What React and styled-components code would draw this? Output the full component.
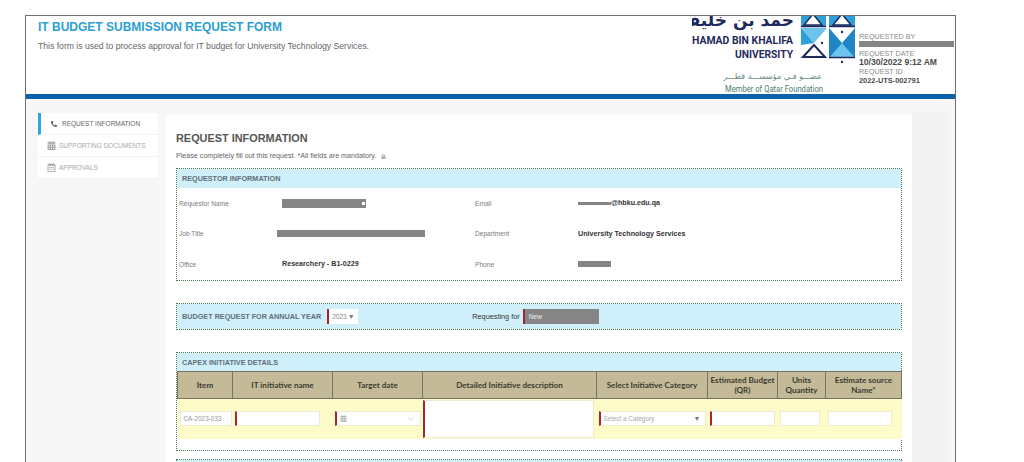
import styled, { createGlobalStyle } from "styled-components";
import { FaPhoneAlt, FaCalendarAlt, FaRegCalendarAlt, FaLock } from "react-icons/fa";
import { ChevronDown } from "lucide-react";

const Global = createGlobalStyle`
  html, body {
    margin: 0;
    height: 462px;
    overflow: hidden;
    background: #fff;
  }
  * { box-sizing: border-box; }
`;

const Frame = styled.div`
  margin: 15px 0 0 25px;
  width: 931px;
  height: 447px;
  overflow: hidden;
  border: 1px solid #6f6f6f;
  border-bottom: 0;
  font-family: "Liberation Sans", Arial, sans-serif;
  display: flex;
  flex-direction: column;
`;

const Header = styled.header`
  height: 78px;
  flex: none;
  display: flex;
  background: #fff;
  padding-left: 12px;
`;

const TitleBlock = styled.div`
  flex: 1;
  padding-top: 4px;
`;

const Title = styled.h1`
  margin: 0;
  font-size: 12px;
  line-height: 14px;
  font-weight: 700;
  color: #2b9fd1;
`;

const Subtitle = styled.p`
  margin: 7px 0 0;
  font-size: 8.65px;
  line-height: 11px;
  color: #666;
`;

const LogoSvg = styled.svg`
  flex: none;
  width: 166px;
  height: 78px;
  display: block;
`;

const Meta = styled.div`
  flex: none;
  width: 97px;
  padding: 16px 0 0 1px;
  display: flex;
  flex-direction: column;
`;

const MetaLabel = styled.span`
  font-size: 7.2px;
  line-height: 9px;
  color: #8a8a8a;
`;

const MetaValue = styled.span`
  font-size: ${(p) => p.$size || 8.6}px;
  line-height: 9px;
  font-weight: 700;
  color: #4a4a4a;
  white-space: nowrap;
`;

const Redacted = styled.span`
  background: #858585;
  width: ${(p) => p.$w}px;
  height: ${(p) => p.$h || 6}px;
  margin-left: ${(p) => p.$ml || 0}px;
  margin-bottom: ${(p) => p.$mb || 0}px;
  flex: none;
  display: flex;
  align-items: center;
  justify-content: flex-end;
  padding-right: 1px;
`;

const RedactGap = styled.i`
  display: block;
  width: 3px;
  height: 3px;
  background: #fff;
`;

const BlueBar = styled.div`
  height: 5px;
  flex: none;
  background: #0b62ac;
`;

const Body = styled.div`
  flex: 1;
  display: flex;
  align-items: flex-start;
  background: #f7f7f7;
  padding: 14px 7px 0 12px;
  min-height: 0;
`;

const Sidebar = styled.nav`
  width: 120px;
  flex: none;
  margin-right: 8px;
  background: #fff;
  display: flex;
  flex-direction: column;
`;

const NavItem = styled.div`
  height: 22px;
  display: flex;
  align-items: center;
  gap: ${(p) => (p.$active ? 5 : 3)}px;
  padding-left: ${(p) => (p.$active ? 10 : 9)}px;
  font-size: 6.5px;
  color: ${(p) => (p.$active ? "#666" : "#a9a9a9")};
  border-left: ${(p) => (p.$active ? "3px solid #2ba6e0" : "0")};
  border-bottom: 1px solid #f3f3f3;
  white-space: nowrap;
  svg { flex: none; color: ${(p) => (p.$active ? "#555" : "#a0a0a0")}; }
`;

const Card = styled.main`
  width: 746px;
  flex: none;
  margin-top: 2px;
  height: 400px;
  background: #fff;
  padding: 16px 10px 0;
`;

const Heading = styled.h2`
  margin: 0;
  font-size: 10.9px;
  line-height: 14px;
  font-weight: 700;
  color: #555;
`;

const Note = styled.p`
  margin: 7px 0 0;
  font-size: 7.15px;
  line-height: 9px;
  color: #666;
  display: flex;
  align-items: center;
  gap: 5px;
  svg { color: #b0b0b0; }
`;

const Section = styled.section`
  border: 1px dotted #4d7a4d;
  margin-top: ${(p) => p.$top}px;
  height: ${(p) => p.$height}px;
  width: 726px;
`;

const Band = styled.div`
  background: #cfeffa;
  height: ${(p) => p.$height || 19}px;
  display: flex;
  align-items: center;
  padding-left: 5px;
  font-size: 7.25px;
  font-weight: 700;
  color: #5f7078;
  white-space: nowrap;
`;

const InfoGrid = styled.div`
  display: grid;
  grid-template-columns: 103px 193px 103px 1fr;
  grid-auto-rows: 30.5px;
  padding-left: 2px;
  align-items: center;
`;

const InfoLabel = styled.span`
  font-size: 6.6px;
  color: #7c7c7c;
`;

const InfoValue = styled.span`
  font-size: 7.15px;
  font-weight: 700;
  color: #333;
  white-space: nowrap;
  display: flex;
  align-items: center;
`;

const YearSelect = styled.div`
  width: 31px;
  height: 15px;
  margin-left: 6px;
  background: #fff;
  border-left: 2px solid #a02530;
  display: flex;
  align-items: center;
  padding-left: 3px;
  gap: 1px;
  font-size: 6.5px;
  font-weight: 400;
  color: #888;
`;

const RequestLabel = styled.span`
  margin-left: 114px;
  margin-right: 3px;
  font-size: 7.3px;
  font-weight: 400;
  color: #333;
`;

const NewSelect = styled.div`
  width: 76px;
  height: 15px;
  background: #858585;
  border-left: 2px solid #a02530;
  padding-left: 4px;
  line-height: 15px;
  font-size: 6.6px;
  font-weight: 400;
  color: #eee;
`;

const Table = styled.table`
  width: 724px;
  border-collapse: collapse;
  table-layout: fixed;
`;

const Th = styled.th`
  height: 27px;
  padding: 0;
  background: #c4ba97;
  border: 1px solid #77735f;
  font-family: Lato, "Open Sans", sans-serif;
  font-size: 8.1px;
  line-height: 10px;
  font-weight: 700;
  color: #3a3a30;
`;

const Td = styled.td`
  height: 40px;
  padding: ${(p) => (p.$flush ? 0 : "0 2px")};
  background: #fdfcc9;
  vertical-align: middle;
`;

const Field = styled.div`
  height: ${(p) => p.$h || 15}px;
  width: ${(p) => p.$w}px;
  background: #fff;
  border: 1px solid #ecebd2;
  border-left: ${(p) => (p.$req ? "2px solid #a5262c" : "1px solid #ecebd2")};
  padding: 0 4px 0 3px;
  display: flex;
  align-items: center;
  justify-content: space-between;
  font-size: 6.4px;
  color: ${(p) => (p.$muted ? "#999" : "#a8a8a8")};
  white-space: nowrap;
  svg { flex: none; color: #b5b5b5; }
`;

const Caret = styled.span`
  font-size: 7px;
  color: #7a7a7a;
`;

const Aside = styled.aside`
  width: 36px;
  flex: none;
  height: 400px;
  margin-top: -1px;
  background: #f3f3f3;
`;

const Logo = () => (
  <LogoSvg viewBox="692 16 166 78">
    <text x="794" y="26" textAnchor="end" fontFamily="'DejaVu Sans', sans-serif" fontWeight="700" fontSize="17" fill="#1f2a5c">حمد بن خليفة</text>
    <text x="692" y="44" fontFamily="Roboto, sans-serif" fontWeight="700" fontSize="11" fill="#1f2a5c" textLength="101" lengthAdjust="spacingAndGlyphs">HAMAD BIN KHALIFA</text>
    <text x="735" y="58" fontFamily="Roboto, sans-serif" fontWeight="700" fontSize="11" fill="#1f2a5c" textLength="58" lengthAdjust="spacingAndGlyphs">UNIVERSITY</text>

    <path d="M801 16h25v10h-25z" fill="#2f9fd8" />
    <path d="M813 14l9 11h-18z" fill="#fff" stroke="#1f2a5c" strokeWidth="1.5" />
    <path d="M801 26.500h25" stroke="#1f2a5c" strokeWidth="1.5" />
    <path d="M829 16h26v10h-26z" fill="#2f9fd8" />
    <path d="M842 14l9 11h-18z" fill="#fff" stroke="#1f2a5c" strokeWidth="1.5" />
    <path d="M829 26.500h26" stroke="#1f2a5c" strokeWidth="1.500" />

    <path d="M801 28h26v30h-26z" fill="#fff" />
    <path d="M801 28h26l-13 15z" fill="#6cc4ec" />
    <path d="M801 28v17l13-2z" fill="#2f9fd8" />
    <path d="M803 57l11-12 11 12z" fill="#fff" stroke="#1f2a5c" strokeWidth="2" />
    <circle cx="822" cy="43" r="1.2" fill="#1f2a5c" />

    <path d="M829 28h26v30h-26z" fill="#1f85c4" />
    <path d="M829 28h26l-13 15z" fill="#fff" />
    <path d="M829 58h26l-13-15z" fill="#6cc4ec" />
    <path d="M829 57.500h26" stroke="#1f2a5c" strokeWidth="1.500" />
    <circle cx="842" cy="32" r="1.2" fill="#1f2a5c" />
    <circle cx="842" cy="62" r="1.2" fill="#1f2a5c" />

    <text x="822" y="79" textAnchor="end" fontFamily="'DejaVu Sans', sans-serif" fontSize="8" fill="#5d8a7d">عضـــو فـي مؤسســـة قطـــر</text>
    <text x="725" y="92" fontFamily="Roboto, sans-serif" fontSize="8.4" fill="#4d7a70" textLength="98" lengthAdjust="spacingAndGlyphs">Member of Qatar Foundation</text>
  </LogoSvg>
);

const columns = [55, 100, 90, 174, 111, 70, 48, 76];
const heads = [
  "Item",
  "IT initiative name",
  "Target date",
  "Detailed Initiative description",
  "Select Initiative  Category",
  "Estimated Budget (QR)",
  "Units Quantity",
  "Estimate source Name*",
];

function App() {
  return (
    <>
      <Global />
      <Frame>
        <Header>
          <TitleBlock>
            <Title>IT BUDGET SUBMISSION REQUEST FORM</Title>
            <Subtitle>This form is used to process approval for IT budget for University Technology Services.</Subtitle>
          </TitleBlock>
          <Logo />
          <Meta>
            <MetaLabel>REQUESTED BY</MetaLabel>
            <Redacted $w={95} $h={6} $mb={2} />
            <MetaLabel>REQUEST DATE</MetaLabel>
            <MetaValue>10/30/2022 9:12 AM</MetaValue>
            <MetaLabel>REQUEST ID</MetaLabel>
            <MetaValue $size={7.4}>2022-UTS-002791</MetaValue>
          </Meta>
        </Header>
        <BlueBar />
        <Body>
          <Sidebar>
            <NavItem $active><FaPhoneAlt size={6} /> REQUEST INFORMATION</NavItem>
            <NavItem><FaCalendarAlt size={9} /> SUPPORTING DOCUMENTS</NavItem>
            <NavItem><FaRegCalendarAlt size={9} /> APPROVALS</NavItem>
          </Sidebar>
          <Card>
            <Heading>REQUEST INFORMATION</Heading>
            <Note>Please completely fill out this request. *All fields are mandatory. <FaLock size={5} /></Note>
            <Section $top={7} $height={113}>
              <Band>REQUESTOR INFORMATION</Band>
              <InfoGrid>
                <InfoLabel>Requestor Name</InfoLabel>
                <InfoValue><Redacted $w={84} $h={9}><RedactGap /></Redacted></InfoValue>
                <InfoLabel>Email</InfoLabel>
                <InfoValue><Redacted $w={33} $h={3} />@hbku.edu.qa</InfoValue>
                <InfoLabel>Job Title</InfoLabel>
                <InfoValue><Redacted $w={148} $h={7} $ml={-5} /></InfoValue>
                <InfoLabel>Department</InfoLabel>
                <InfoValue>University Technology Services</InfoValue>
                <InfoLabel>Office</InfoLabel>
                <InfoValue>Researchery - B1-0229</InfoValue>
                <InfoLabel>Phone</InfoLabel>
                <InfoValue><Redacted $w={33} $h={6} /></InfoValue>
              </InfoGrid>
            </Section>
            <Section $top={22} $height={27}>
              <Band $height={25}>
                BUDGET REQUEST FOR ANNUAL YEAR
                <YearSelect>2023 <Caret>▼</Caret></YearSelect>
                <RequestLabel>Requesting for</RequestLabel>
                <NewSelect>New</NewSelect>
              </Band>
            </Section>
            <Section $top={22} $height={99}>
              <Band $height={18}>CAPEX INITIATIVE DETAILS</Band>
              <Table>
                <colgroup>
                  {columns.map((w, i) => <col key={i} style={{ width: w }} />)}
                </colgroup>
                <thead>
                  <tr>{heads.map((h) => <Th key={h}>{h}</Th>)}</tr>
                </thead>
                <tbody>
                  <tr>
                    <Td><Field $w={52} $muted>CA-2023-033</Field></Td>
                    <Td><Field $w={85} $req /></Td>
                    <Td><Field $w={86} $req><FaCalendarAlt size={7} /><ChevronDown size={10} strokeWidth={1.5} /></Field></Td>
                    <Td $flush><Field $w={171} $h={38} $req /></Td>
                    <Td><Field $w={107} $req>Select a Category <Caret>▼</Caret></Field></Td>
                    <Td><Field $w={65} $req /></Td>
                    <Td><Field $w={40} /></Td>
                    <Td><Field $w={64} /></Td>
                  </tr>
                </tbody>
              </Table>
            </Section>
            <Section $top={8} $height={40}>
              <Band />
            </Section>
          </Card>
          <Aside />
        </Body>
      </Frame>
    </>
  );
}

export default App;
